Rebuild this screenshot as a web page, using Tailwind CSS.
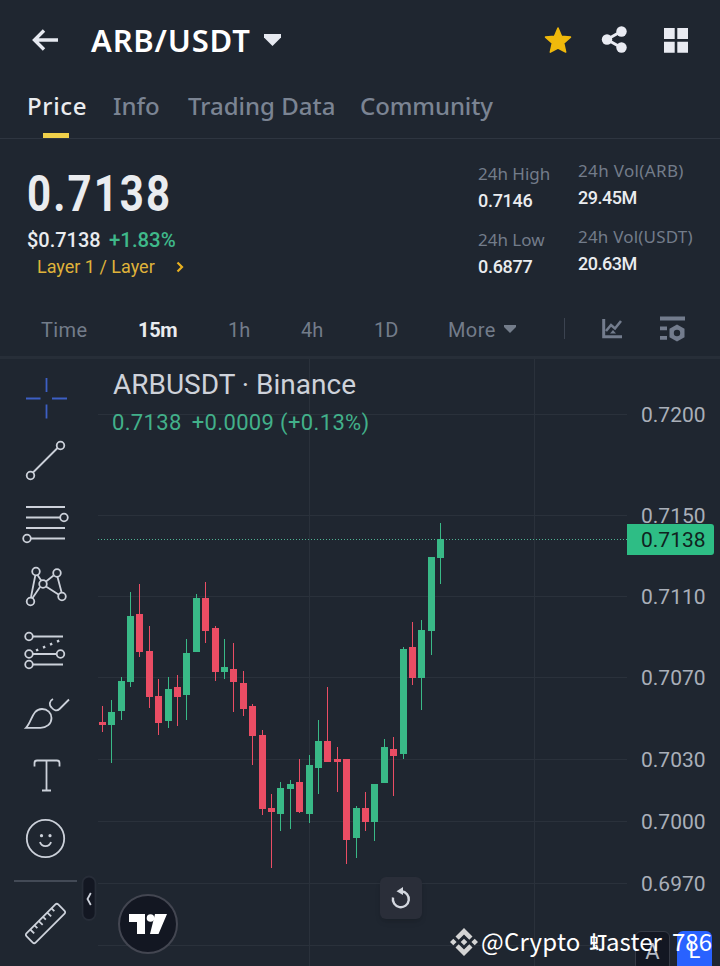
<!DOCTYPE html>
<html lang="en">
<head>
  <meta charset="UTF-8">
  <title>ARB/USDT</title>
  <script src="https://cdn.jsdelivr.net/npm/@tailwindcss/browser@4"></script>
</head>
<body class="bg-[#1f2630] overflow-hidden">
  <div class="relative w-[720px] h-[966px] overflow-hidden flex flex-col font-['Noto_Sans',sans-serif] text-[#eaecef] whitespace-nowrap">

    <header class="h-20 shrink-0 flex items-center pl-8 pr-8">
      <svg class="w-[27px] h-6 shrink-0" viewBox="0 0 27 24" fill="none" stroke="#e6e9f0" stroke-width="3.4"><path d="M26 12H3M12 2.5 2.5 12l9.500 9.500"/></svg>
      <h1 class="ml-8 w-[161px] text-[31px] leading-[38px] font-semibold text-white tracking-[0.8px]">ARB/USDT</h1>
      <svg class="ml-3 w-[17px] h-[14px]" viewBox="0 0 17 14" fill="#e6e9f0"><path d="M0 1h17v3.500L8.500 13 0 4.500z"/></svg>
      <div class="ml-auto flex items-center">
        <svg class="w-7 h-7" viewBox="0 0 28 28" fill="#f0b90b" stroke="#f0b90b" stroke-width="1.500" stroke-linejoin="round"><path d="M14 2l3.500 8.300 9 .8-6.800 6 2 9L14 22l-7.700 4.100 2-9-6.800-6 9-.8z"/></svg>
        <svg class="ml-7 w-7 h-7" viewBox="0 0 28 28" fill="#e9ebf2"><path d="M7 13.500 21 5.500M7 13.500l14 8" stroke="#e9ebf2" stroke-width="3"/><circle cx="7" cy="13.500" r="5.200"/><circle cx="21.500" cy="5.500" r="5.200"/><circle cx="21.500" cy="21.500" r="5.200"/></svg>
        <svg class="ml-9 w-6 h-[25px]" viewBox="0 0 24 25" fill="#e9ebf2"><path d="M0 0h10.700v11H0zM13.300 0H24v11H13.300zM0 13.700h10.700v11H0zM13.300 13.700H24v11H13.300z"/></svg>
      </div>
    </header>

    <nav class="h-[59px] shrink-0 flex pl-[27px] pt-[11px] border-b border-[#2e3540] text-[24px] leading-[30px] font-medium text-[#7b8493]">
      <div class="relative w-[86px] tracking-[0.7px] text-[#eaecef]">Price
        <span class="absolute left-4 top-[42px] w-[26px] h-[5px] bg-[#f0d04a]"></span>
      </div>
      <div class="w-[75px]">Info</div>
      <div class="w-[172px]">Trading Data</div>
      <div class="tracking-[-0.1px]">Community</div>
    </nav>

    <section class="h-[162px] shrink-0 flex pl-[27px]">
      <div class="w-[451px] pt-[30px] font-['Roboto',sans-serif]">
        <div class="origin-left scale-x-[0.84] text-[50px] leading-[50px] font-bold tracking-[2.5px]">0.7138</div>
        <div class="mt-[10px] flex text-[21px] leading-[22px] font-medium">
          <span class="w-[82px] origin-left scale-x-95">$0.7138</span>
          <span class="origin-left scale-x-[0.97] text-[#3fb98a]">+1.83%</span>
        </div>
        <div class="mt-[5px] pl-[10px] flex items-center text-[18px] leading-[22px] text-[#dfb23a]">
          <span class="w-[139px]">Layer 1 / Layer</span>
          <svg class="w-2 h-3" viewBox="0 0 8 12" fill="none" stroke="#e8b020" stroke-width="2.200"><path d="M1.500 1.500 6 6l-4.500 4.500"/></svg>
        </div>
      </div>
      <div class="w-[100px] pt-[25px] text-[17px]">
        <div class="leading-5 text-[#737c8a]">24h High</div>
        <div class="mt-[7px] text-[18px] leading-5 font-medium tracking-[-0.3px] font-['Roboto',sans-serif]">0.7146</div>
        <div class="mt-[19px] leading-5 text-[#737c8a]">24h Low</div>
        <div class="mt-[7px] text-[18px] leading-5 font-medium tracking-[-0.3px] font-['Roboto',sans-serif]">0.6877</div>
      </div>
      <div class="pt-[22px] text-[17px]">
        <div class="leading-5 tracking-[0.35px] text-[#737c8a]">24h Vol(ARB)</div>
        <div class="mt-[7px] text-[18px] leading-5 font-medium tracking-[-0.5px] font-['Roboto',sans-serif]">29.45M</div>
        <div class="mt-[19px] leading-5 tracking-[0.2px] text-[#737c8a]">24h Vol(USDT)</div>
        <div class="mt-[7px] text-[18px] leading-5 font-medium tracking-[-0.5px] font-['Roboto',sans-serif]">20.63M</div>
      </div>
    </section>

    <div class="h-[58px] shrink-0 flex items-center pl-[41px] border-b-[3px] border-[#272e38] text-[20px] leading-6 text-[#737c8a] font-['Roboto',sans-serif]">
      <span class="w-[97px] pt-0.5 tracking-[0.4px]">Time</span>
      <span class="w-[90px] pt-0.5 font-bold tracking-[-0.3px] text-[#eaecef]">15m</span>
      <span class="w-[73px] pt-0.5">1h</span>
      <span class="w-[73px] pt-0.5">4h</span>
      <span class="w-[74px] pt-0.5">1D</span>
      <span class="w-[56px] pt-0.5 tracking-[0.4px]">More</span>
      <svg class="w-3 h-[10px]" viewBox="0 0 12 10" fill="#737c8a"><path d="M0 1h12v2L6 9 0 3z"/></svg>
      <span class="ml-12 w-px h-[21px] bg-[#3b4350]"></span>
      <svg class="ml-[37px] w-5 h-5" viewBox="0 0 20 20" fill="none" stroke="#737c8d" stroke-width="3"><path d="M1.700 0v17.700H20"/><path d="M4 12l5-6 4 3.500L19 2" stroke-width="2.600"/><path d="M8 14.500l3-3.500 3 3.500z" fill="#737c8d" stroke="none"/></svg>
      <svg class="ml-[38px] w-[25px] h-[26px]" viewBox="0 0 25 26" fill="#737c8d"><path d="M0 0.500h25v4H0zM0 10.500h7v3.800H0zM0 20h7v3.800H0z"/><path fill-rule="evenodd" d="M17 8.500l7.500 4.300v8.500L17 25.500l-7.500-4.200v-8.500zM17 13.800a3.200 3.200 0 1 0 0 6.400 3.200 3.200 0 0 0 0-6.400z"/></svg>
    </div>

    <main class="relative h-[607px] shrink-0 flex font-['Roboto',sans-serif]">
      <!-- drawing tools -->
      <svg class="w-[98px] h-[607px] shrink-0" viewBox="0 359 98 607" fill="none" stroke="#ccd1da" stroke-width="1.800">
        <path d="M46.500 378v14M46.500 404.500v14M26 398.500h14.500M52 398.500h15" stroke="#3d5fc4"/>
        <path d="M33 472.500 57.500 448"/><circle cx="30.500" cy="475.500" r="3.800"/><circle cx="60.500" cy="445.500" r="3.800"/>
        <path d="M26 507h39M26 517.500h34M26 528h39M31 538.500h34"/><circle cx="64" cy="517.500" r="3.800"/><circle cx="27" cy="538.500" r="3.800"/>
        <path d="M35.300 575.500 31 597M37.500 575l4 6M40 587l-7.500 11M46 581.500l7.500-6M57.500 577l4 15M46 586.500l12.500 8"/>
        <circle cx="36" cy="571.500" r="3.800"/><circle cx="57" cy="573" r="3.800"/><circle cx="43" cy="584" r="3.800"/><circle cx="30.500" cy="601.500" r="3.800"/><circle cx="62" cy="596.500" r="3.800"/>
        <path d="M33 636.500h30M33 654h23.500M33 664.500h30"/><circle cx="29" cy="636.500" r="3.800"/><circle cx="29" cy="654" r="3.800"/><circle cx="60.500" cy="654" r="3.800"/><circle cx="29" cy="664.500" r="3.800"/>
        <path d="M36 650.500 62 639.500" stroke-width="2.400" stroke-dasharray="2.400 5.200"/>
        <path d="M26 727.800C32 722 32 709 42 709c5.500 0 9.500 4 9.500 9 0 6-5 9.800-11 9.800z"/>
        <path d="M53 699c-4 2-4 6-1.500 8.500 2.500 3 5.500 4 8 1.500L69 699.500"/>
        <path d="M34.500 766.500V763q0-2.500 2.500-2.500h20q2.500 0 2.500 2.500v3.500M46.500 760.500v30M42 790.500h9"/>
        <circle cx="45.500" cy="838.500" r="18.700"/><path d="M40 842c1.500 5.500 9.500 5.500 11 0"/><circle cx="41.500" cy="835.700" r="1.600" fill="#ccd1da" stroke="none"/><circle cx="50" cy="835.700" r="1.600" fill="#ccd1da" stroke="none"/>
        <path d="M14 881h63" stroke="#434a56"/>
        <rect x="82.500" y="876.500" width="13" height="43.500" rx="6.500" fill="#131722" stroke="#272d38"/>
        <path d="M90.800 893l-3.300 6 3.300 6"/>
        <g transform="translate(45.500 923.500) rotate(-45)"><rect x="-22.500" y="-6.500" width="45" height="13" rx="2"/><path d="M-15-6.500v5.500M-9-6.500v4M-3-6.500v5.500M3-6.500v4M9-6.500v5.500M15-6.500v4"/></g>
      </svg>

      <svg id="chart" class="w-[622px] h-[607px] shrink-0" viewBox="98 359 622 607" font-size="21" fill="#a9afb9">
        <path d="M98 414.500h529M98 515.500h529M98 596.500h529M98 677.500h529M98 759.500h529M98 821.500h529M98 883.500h529M98 945.500h529M309.500 359v607M534.500 359v607" stroke="#2a313b"/>
        <path d="M98 539.500h529" stroke="#4fb394" stroke-dasharray="1 2"/>
        <g id="candles" shape-rendering="crispEdges"></g>
        <text x="641" y="422">0.7200</text>
        <text x="641" y="523">0.7150</text>
        <text x="641" y="604">0.7110</text>
        <text x="641" y="685">0.7070</text>
        <text x="641" y="767">0.7030</text>
        <text x="641" y="829">0.7000</text>
        <text x="641" y="891">0.6970</text>
        <path d="M627 524h84q3 0 3 3v25q0 3-3 3h-84z" fill="#2ebd85"/>
        <text x="641" y="547" fill="#10231f">0.7138</text>
      </svg>

      <div class="absolute left-[112px] top-[11px]">
        <div class="pl-px text-[28px] leading-[30px] text-[#ced2da]">ARBUSDT · Binance</div>
        <div class="mt-[11px] flex gap-[10px] text-[22px] leading-6 tracking-[0.35px] text-[#42b08a]"><span>0.7138</span><span>+0.0009 (+0.13%)</span></div>
      </div>

      <div class="absolute left-[118px] top-[535px] w-[60px] h-[60px] rounded-full bg-[#131722] border-2 border-[#434651] flex items-center justify-center">
        <svg class="w-[38px] h-5" viewBox="0 0 38 20" fill="#fff"><path d="M0 0h16v20H8V8H0zM26 0h12l-8.500 20H21z"/><circle cx="21.500" cy="4" r="3.800"/></svg>
      </div>

      <div class="absolute left-[380px] top-[518px] w-[42px] h-[42px] rounded-md bg-[#2a2e39] shadow-md flex items-center justify-center">
        <svg class="w-[22px] h-[22px]" viewBox="0 0 22 22" fill="none" stroke="#d3d7df" stroke-width="2.400"><path d="M3 10.500a8 8 0 1 0 8.500-6.300"/><path d="M13 0v8L6.500 4.200z" fill="#d3d7df" stroke="none"/></svg>
      </div>

      <div class="absolute left-[635px] top-[572px] w-[35px] h-[40px] rounded-md bg-[#131722] border border-[#363a45] text-center text-[22px] leading-[39px] text-[#b5bac4]">A</div>
      <div class="absolute left-[677px] top-[572px] w-[35px] h-[40px] rounded-md bg-[#2962ff] text-center text-[22px] leading-[39px] text-white">L</div>
    </main>

    <div class="absolute left-[450px] top-[926px] flex items-center text-[24px] leading-[30px] text-white font-['Noto_Sans_CJK_SC',sans-serif]">
      <svg class="w-[28px] h-[28px] mr-[3px] mt-0.5" viewBox="0 0 28 28" fill="#d4d4d4"><path d="M14 0l8.500 8.500-3.200 3.200L14 6.400l-5.300 5.300-3.200-3.200zM14 28l8.500-8.500-3.200-3.200-5.300 5.300-5.300-5.300-3.200 3.200zM3.300 10.700 6.600 14l-3.300 3.300L0 14zM24.700 10.700 28 14l-3.300 3.300-3.300-3.300zM14 10.700l3.300 3.300-3.300 3.300-3.300-3.300z"/></svg>
      <span class="w-[108px] tracking-[0.2px]">@Crypto</span>
      <span class="w-[17px] text-[18px] font-bold">虰</span>
      <span class="w-[66px] tracking-[0.1px]">aster</span>
      <span>786</span>
    </div>
  </div>

  <script>
    // x, high, body top, body bottom, low, up
    const candles = [
      [102, 706, 722, 725, 732, 0], [111, 700, 712, 725, 763, 1], [121, 677, 681, 711, 720, 1],
      [130, 592, 616, 682, 687, 1], [139, 584, 614, 652, 657, 0], [149, 626, 651, 697, 708, 0],
      [158, 679, 696, 723, 735, 0], [168, 677, 689, 721, 728, 1], [177, 675, 687, 697, 726, 0],
      [186, 639, 653, 695, 720, 1], [196, 594, 598, 652, 652, 1], [205, 582, 598, 631, 643, 0],
      [215, 626, 628, 672, 681, 0], [224, 639, 667, 672, 679, 1], [233, 643, 669, 682, 712, 0],
      [243, 671, 683, 709, 716, 0], [252, 704, 706, 736, 765, 0], [262, 730, 735, 809, 815, 0],
      [271, 794, 808, 812, 868, 0], [280, 782, 788, 814, 831, 1], [290, 780, 784, 789, 829, 1],
      [299, 759, 782, 812, 813, 0], [309, 755, 765, 814, 823, 1], [318, 720, 741, 768, 794, 1],
      [327, 687, 741, 762, 762, 0], [337, 747, 759, 762, 792, 0], [346, 759, 759, 840, 864, 0],
      [356, 806, 808, 838, 858, 1], [365, 792, 808, 822, 831, 0], [374, 784, 784, 822, 841, 1],
      [384, 739, 747, 783, 783, 1], [393, 737, 749, 756, 796, 0], [403, 647, 649, 754, 759, 1],
      [412, 622, 647, 678, 685, 0], [421, 620, 630, 678, 710, 1], [431, 557, 557, 631, 655, 1],
      [440, 523, 539, 558, 584, 1]
    ];
    document.getElementById('candles').innerHTML = candles.map(([x, high, top, bottom, low, up]) => `
      <g fill="${up ? '#39b987' : '#ea4d64'}">
        <rect x="${x}" y="${high}" width="1" height="${low - high}"/>
        <rect x="${x - 3}" y="${top}" width="7" height="${bottom - top}"/>
      </g>`).join('');
  </script>
</body>
</html>
